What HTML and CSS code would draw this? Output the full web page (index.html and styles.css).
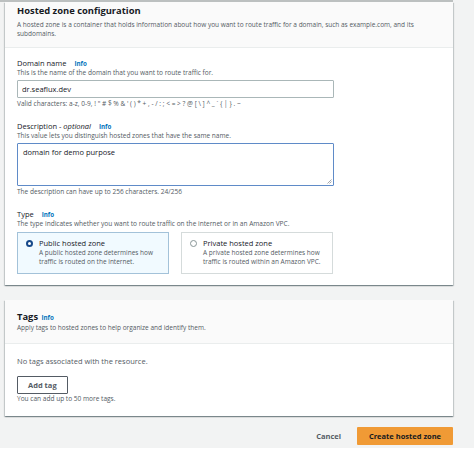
FILE: index.html
```html
<!DOCTYPE html>
<html lang="en">
<head>
    <meta charset="UTF-8">
    <meta name="viewport" content="width=device-width, initial-scale=1.0">
    <title>Create hosted zone</title>
    <link rel="stylesheet" href="styles.css">
</head>
<body>
    <div class="page">
        <div class="strip"></div>

        <!-- Hosted zone configuration -->
        <section class="panel config">
            <header class="panel-header">
                <h2>Hosted zone configuration</h2>
                <p>A hosted zone is a container that holds information about how you want to route traffic for a domain, such as example.com, and its subdomains.</p>
            </header>
            <div class="panel-body">
                <div class="field">
                    <div class="label">Domain name <a class="info">Info</a></div>
                    <div class="hint">This is the name of the domain that you want to route traffic for.</div>
                    <input class="text-input" type="text" value="dr.seaflux.dev">
                    <div class="hint constraint">Valid characters: a-z, 0-9, ! " # $ % &amp; ' ( ) * + , - / : ; &lt; = &gt; ? @ [ \ ] ^ _ ` { | } . ~</div>
                </div>

                <div class="field">
                    <div class="label">Description - <em>optional</em> <a class="info">Info</a></div>
                    <div class="hint">This value lets you distinguish hosted zones that have the same name.</div>
                    <div class="textarea-wrap">
                        <textarea class="text-area">domain for demo purpose</textarea>
                        <svg class="grip" width="5" height="5" viewBox="0 0 5 5">
                            <path d="M0.5 4.5 L4.5 0.5 M2.5 4.5 L4.5 2.5" stroke="#8a9099" stroke-width="0.8"/>
                        </svg>
                    </div>
                    <div class="hint constraint">The description can have up to 256 characters. 24/256</div>
                </div>

                <div class="field">
                    <div class="label">Type <a class="info">Info</a></div>
                    <div class="hint">The type indicates whether you want to route traffic on the internet or in an Amazon VPC.</div>
                    <div class="tiles">
                        <label class="tile selected">
                            <span class="radio"></span>
                            <span class="tile-text">
                                <span class="tile-title">Public hosted zone</span>
                                <span class="tile-desc">A public hosted zone determines how traffic is routed on the internet.</span>
                            </span>
                        </label>
                        <label class="tile">
                            <span class="radio"></span>
                            <span class="tile-text">
                                <span class="tile-title">Private hosted zone</span>
                                <span class="tile-desc">A private hosted zone determines how traffic is routed within an Amazon VPC.</span>
                            </span>
                        </label>
                    </div>
                </div>
            </div>
        </section>

        <!-- Tags -->
        <section class="panel tags">
            <header class="panel-header">
                <h2>Tags <a class="info">Info</a></h2>
                <p>Apply tags to hosted zones to help organize and identify them.</p>
            </header>
            <div class="panel-body">
                <div class="empty">No tags associated with the resource.</div>
                <button class="btn">Add tag</button>
                <div class="hint">You can add up to 50 more tags.</div>
            </div>
        </section>

        <div class="actions">
            <button class="btn-link">Cancel</button>
            <button class="btn-primary">Create hosted zone</button>
        </div>
    </div>
</body>
</html>
```

FILE: styles.css
```css
/* General */
* {
    box-sizing: border-box;
}

html {
    background: #ffffff;
}

body {
    margin: 0;
    font-family: 'Open Sans', 'Liberation Sans', Arial, sans-serif;
    font-size: 7.5px;
    line-height: 10px;
    color: #16191f;
}

.page {
    height: 448px;
    padding: 0 21px 0 5px;
    background: #f2f3f3;
}

.strip {
    height: 2px;
    margin-left: -5px;
    background: #bcc0c0;
}

/* Panels */
.panel {
    background: #ffffff;
    box-shadow: 0 1px 1px 0 rgba(0, 28, 36, 0.3),
                1px 1px 1px 0 rgba(0, 28, 36, 0.15),
                -1px 1px 1px 0 rgba(0, 28, 36, 0.15);
}

.panel-header {
    background: #fafafa;
    padding: 2px 12px 0;
    height: 46px;
    border-bottom: 1px solid #eaeded;
}

.panel-header h2 {
    margin: 0;
    font-size: 9.4px;
    line-height: 13px;
    font-weight: 700;
}

.panel-header p {
    max-width: 418px;
    margin: 3px 0 0;
    font-size: 6.5px;
    line-height: 9px;
    color: #545b64;
}

.panel-body {
    padding: 10px 12px 11px;
}

.info {
    margin-left: 6px;
    font-size: 6.2px;
    line-height: 1;
    font-weight: 700;
    color: #0073bb;
}

.panel-header h2 .info {
    margin-left: 1px;
}

/* Form fields */
.field + .field {
    margin-top: 13px;
}

.label {
    font-weight: 500;
}

.label em {
    font-style: italic;
}

.hint {
    font-size: 6.55px;
    line-height: 9px;
    color: #545b64;
}

.constraint {
    margin-top: 1px;
}

.text-input {
    display: block;
    width: 317px;
    height: 18px;
    margin-top: 3px;
    padding: 0 4px;
    border: 1px solid #aab7b8;
    border-radius: 1px;
    font-family: inherit;
    font-size: 7.5px;
    color: #16191f;
    background: #ffffff;
}

.textarea-wrap {
    position: relative;
    width: 317px;
    margin-top: 3px;
}

.text-area {
    display: block;
    width: 317px;
    height: 43px;
    padding: 3px 5px;
    border: 1px solid #5f8bc8;
    border-radius: 1px;
    font-family: inherit;
    font-size: 7.5px;
    line-height: 10px;
    color: #16191f;
    resize: none;
}

.grip {
    position: absolute;
    right: 2px;
    bottom: 2px;
}

/* Radio tiles */
.tiles {
    display: flex;
    gap: 12px;
    margin-top: 4px;
}

.tile {
    display: flex;
    gap: 6px;
    width: 152px;
    padding: 5px 5px 7px 8px;
    border: 1px solid #d5dbdb;
    background: #ffffff;
}

.tile.selected {
    border-color: #a3c2d9;
    background: #f1faff;
}

.radio {
    flex: none;
    width: 7px;
    height: 7px;
    margin-top: 1.5px;
    border: 1px solid #879596;
    border-radius: 50%;
    background: #ffffff;
}

.tile.selected .radio {
    border: 2px solid #17498a;
}

.tile-text {
    display: flex;
    flex-direction: column;
}

.tile-title {
    font-weight: 500;
}

.tile-desc {
    font-size: 6.5px;
    line-height: 9px;
    color: #545b64;
}

/* Tags */
.tags {
    margin-top: 15px;
}

.tags .panel-header {
    height: 44px;
    padding-top: 10px;
}

.tags .panel-header p {
    margin-top: 0;
}

.tags .panel-body {
    padding: 12px 12px 13px;
}

.empty {
    color: #545b64;
}

.btn {
    display: block;
    height: 18px;
    margin-top: 10px;
    padding: 0 10px;
    border: 1px solid #545b64;
    border-radius: 1px;
    background: #ffffff;
    font-family: inherit;
    font-size: 7.5px;
    font-weight: 700;
    color: #545b64;
}

/* Footer actions */
.actions {
    display: flex;
    justify-content: flex-end;
    align-items: center;
    gap: 8px;
    margin-top: 11px;
}

.btn-link {
    padding: 0 8px;
    border: none;
    background: none;
    font-family: inherit;
    font-size: 7.5px;
    font-weight: 700;
    color: #545b64;
}

.btn-primary {
    width: 96px;
    height: 18px;
    border: none;
    border-radius: 1px;
    background: #f09a35;
    font-family: inherit;
    font-size: 7.5px;
    font-weight: 700;
    color: #16191f;
}
```
